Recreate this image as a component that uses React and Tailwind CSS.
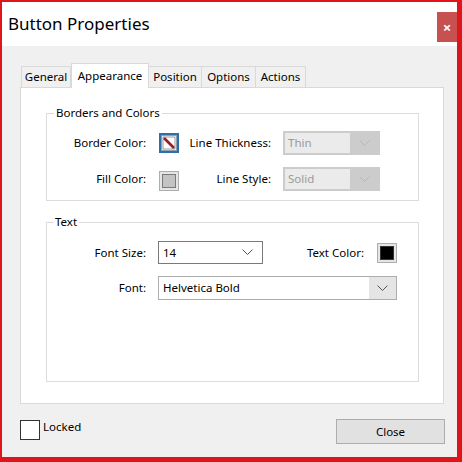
const font = { fontFamily: '"Noto Sans", "Liberation Sans", sans-serif' };

function Chevron({ className }) {
  return (
    <svg width="11" height="7" viewBox="0 0 11 7" className={className}>
      <path d="M0.5 0.5 L5.5 5.5 L10.5 0.5" fill="none" stroke="currentColor" strokeWidth="1" />
    </svg>
  );
}

function DisabledSelect({ value }) {
  return (
    <div className="flex h-[24px] w-[97px] bg-[#cccccc] p-[2px]">
      <div className="flex flex-1 items-center bg-[#ebebeb] pl-[3px] text-[#9a9a9a]">{value}</div>
      <div className="flex w-[28px] items-center justify-center text-[#b8b8b8]">
        <Chevron />
      </div>
    </div>
  );
}

function Tab({ label, width, first }) {
  return (
    <div
      className={`flex h-[21px] items-center justify-center border border-b-0 border-[#d9d9d9] bg-[#f0f0f0] ${
        first ? "" : "border-l-0"
      } ${width}`}
    >
      {label}
    </div>
  );
}

export default function App() {
  return (
    <div
      className="flex h-[462px] w-[462px] flex-col border-t-2 border-l-2 border-r-[5px] border-b-[5px] border-[#e0141b] bg-[#f0f0f0] text-[11.5px] text-black"
      style={font}
    >
      {/* title bar */}
      <div className="flex h-[44px] shrink-0 items-start justify-between bg-white">
        <div className="pl-[6px] pt-[11px] text-[17px] leading-[22px]">Button Properties</div>
        <div className="mt-[10px] flex h-[30px] w-[20px] items-center justify-center bg-[#c75050] text-[15px] font-bold text-white">
          ×
        </div>
      </div>

      <div className="flex flex-1 flex-col pl-[18px] pr-[12px] pt-[17px]">
        {/* tabs */}
        <div className="flex items-end pl-[1px]">
          <Tab label="General" width="w-[50px]" first />
          <div className="relative z-10 -mb-px flex h-[25px] w-[78px] items-start justify-center border border-b-0 border-[#d9d9d9] bg-white pt-[3px]">
            Appearance
          </div>
          <Tab label="Position" width="w-[53px]" />
          <Tab label="Options" width="w-[54px]" />
          <Tab label="Actions" width="w-[50px]" />
        </div>

        {/* panel */}
        <div className="flex h-[317px] w-[424px] flex-col border border-[#d9d9d9] bg-white pl-[25px] pt-[17px]">
          <fieldset className="w-[373px] border border-[#dcdcdc] pb-[9px]">
            <legend className="ml-[7px] px-[2px] leading-[16px]">Borders and Colors</legend>
            <div className="mt-[10px] flex items-center">
              <div className="w-[99px] text-right">Border Color:</div>
              <div className="ml-[13px] flex h-[20px] w-[20px] items-center justify-center border-2 border-[#2d6fa8] bg-white">
                <svg width="16" height="16" viewBox="0 0 16 16">
                  <rect x="0.5" y="0.5" width="15" height="15" fill="white" stroke="#1b3f66" strokeDasharray="1 1" />
                  <rect x="2" y="2" width="12" height="12" fill="white" stroke="#555" strokeWidth="0.6" />
                  <path d="M3 3 L13 13" stroke="#9b1c22" strokeWidth="2.6" />
                </svg>
              </div>
              <div className="w-[92px] text-right">Line Thickness:</div>
              <div className="ml-[12px]">
                <DisabledSelect value="Thin" />
              </div>
            </div>
            <div className="mt-[12px] flex items-center">
              <div className="w-[99px] text-right">Fill Color:</div>
              <div className="ml-[13px] mt-[4px] flex h-[20px] w-[20px] items-center justify-center border border-[#adadad] bg-[#e5e5e5]">
                <div className="h-[14px] w-[14px] border border-[#7a7a7a] bg-[#c3c3c3]" />
              </div>
              <div className="w-[92px] text-right">Line Style:</div>
              <div className="ml-[12px]">
                <DisabledSelect value="Solid" />
              </div>
            </div>
          </fieldset>

          <fieldset className="mt-[13px] h-[168px] w-[373px] border border-[#dcdcdc]">
            <legend className="ml-[6px] px-[2px] leading-[16px]">Text</legend>
            <div className="mt-[11px] flex items-center">
              <div className="w-[99px] text-right">Font Size:</div>
              <div className="ml-[12px] flex h-[23px] w-[105px] items-center justify-between border border-[#7a7a7a] bg-white pl-[4px] pr-[9px]">
                <span>14</span>
                <Chevron className="text-[#555]" />
              </div>
              <div className="w-[101px] text-right">Text Color:</div>
              <div className="ml-[13px] flex h-[20px] w-[20px] items-center justify-center border border-[#adadad] bg-[#e5e5e5]">
                <div className="h-[14px] w-[14px] border border-[#333] bg-black" />
              </div>
            </div>
            <div className="mt-[12px] flex items-center">
              <div className="w-[99px] text-right">Font:</div>
              <div className="ml-[12px] flex h-[24px] w-[239px] border border-[#adadad] bg-[#e5e5e5]">
                <div className="flex flex-1 items-center bg-white pl-[4px]">Helvetica Bold</div>
                <div className="flex w-[27px] items-center justify-center text-[#555]">
                  <Chevron />
                </div>
              </div>
            </div>
          </fieldset>
        </div>

        {/* footer */}
        <div className="mt-[15px] flex items-start justify-between">
          <div className="flex items-start">
            <div className="mt-px h-[20px] w-[20px] border border-[#333] bg-white" />
            <span className="ml-[3px] leading-[16px]">Locked</span>
          </div>
          <div className="flex h-[25px] w-[109px] items-center justify-center border border-[#adadad] bg-[#e1e1e1]">
            Close
          </div>
        </div>
      </div>
    </div>
  );
}
